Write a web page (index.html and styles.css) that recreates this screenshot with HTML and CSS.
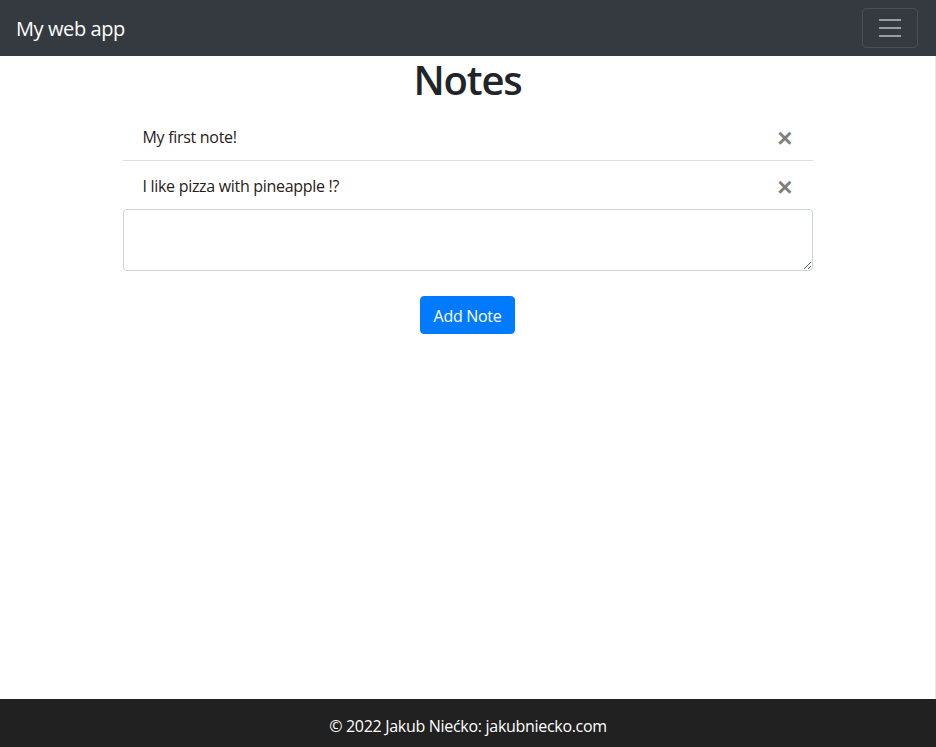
FILE: index.html
```html
<!DOCTYPE html>
<html lang="en">
<head>
<meta charset="utf-8">
<title>My web app</title>
<link rel="stylesheet" href="styles.css">
</head>
<body>
<div class="app">
  <nav class="navbar">
    <span class="brand">My web app</span>
    <button class="toggler" type="button" aria-label="Toggle navigation">
      <svg width="30" height="30" viewBox="0 0 30 30"><path stroke="rgba(255,255,255,0.5)" stroke-linecap="butt" stroke-miterlimit="10" stroke-width="2" d="M4 7h22M4 15h22M4 23h22"/></svg>
    </button>
  </nav>
  <main class="content">
    <div class="container">
      <h1 class="title">Notes</h1>
      <ul class="list">
        <li class="item"><span class="note">My first note!</span><button class="close" type="button">×</button></li>
        <li class="item"><span class="note">I like pizza with pineapple !?</span><button class="close" type="button">×</button></li>
      </ul>
      <textarea class="field" rows="2"></textarea>
      <div class="actions">
        <button class="btn" type="button">Add Note</button>
      </div>
    </div>
  </main>
  <footer class="footer">© 2022 Jakub Niećko: jakubniecko.com</footer>
</div>
</body>
</html>
```

FILE: styles.css
```css
* { box-sizing: border-box; }
html, body { margin: 0; padding: 0; height: 100%; }
body {
  font-family: "Open Sans", "Noto Sans", "Liberation Sans", sans-serif;
  font-size: 16px;
  line-height: 1.5;
  color: #212529;
  background: #fff;
}
.app {
  min-height: 100%;
  display: flex;
  flex-direction: column;
}
.navbar {
  height: 56px;
  background: #343a40;
  display: flex;
  align-items: center;
  justify-content: space-between;
  padding: 8px 18px 8px 16px;
}
.brand {
  color: #fff;
  font-size: 20px;
  line-height: 30px;
  letter-spacing: -0.4px;
  padding-top: 2px;
}
.toggler {
  width: 56px;
  height: 40px;
  padding: 4px 12px;
  background: transparent;
  border: 1px solid rgba(255,255,255,0.1);
  border-radius: 4px;
  display: flex;
  align-items: center;
  justify-content: center;
}
.content {
  flex: 1;
  border-right: 1px solid #e8e8e8;
}
.container {
  width: 720px;
  margin: 0 auto;
  padding: 0 15px;
}
.title {
  margin: 0 0 8px;
  text-align: center;
  font-size: 40px;
  line-height: 48px;
  font-weight: 600;
  letter-spacing: -1.2px;
}
.list { list-style: none; margin: 0; padding: 0; }
.item {
  display: flex;
  align-items: center;
  justify-content: space-between;
  height: 49px;
  padding: 0 20px;
  border-bottom: 1px solid rgba(0,0,0,0.125);
}
.item:last-child { border-bottom: 0; height: 48px; }
.note {
  font-size: 16px;
  line-height: 24px;
  letter-spacing: -0.3px;
  color: #2a2020;
  padding-top: 2px;
}
.close {
  background: none;
  border: 0;
  padding: 4px 0 0;
  font-family: "Liberation Sans", sans-serif;
  font-size: 26px;
  line-height: 24px;
  font-weight: 700;
  color: #000;
  opacity: 0.5;
}
.field {
  display: block;
  width: 100%;
  height: 62px;
  padding: 6px 12px;
  font: inherit;
  border: 1px solid #ced4da;
  border-radius: 4px;
  resize: vertical;
}
.actions {
  display: flex;
  justify-content: center;
  padding-top: 25px;
}
.btn {
  height: 38px;
  width: 95px;
  padding: 7px 12px 5px;
  background: #007bff;
  color: #fff;
  border: 1px solid #007bff;
  border-radius: 4px;
  font: inherit;
  letter-spacing: -0.3px;
}
.footer {
  height: 48px;
  background: #212121;
  color: #fff;
  display: flex;
  align-items: center;
  justify-content: center;
  padding-top: 6px;
  letter-spacing: -0.3px;
}
```
